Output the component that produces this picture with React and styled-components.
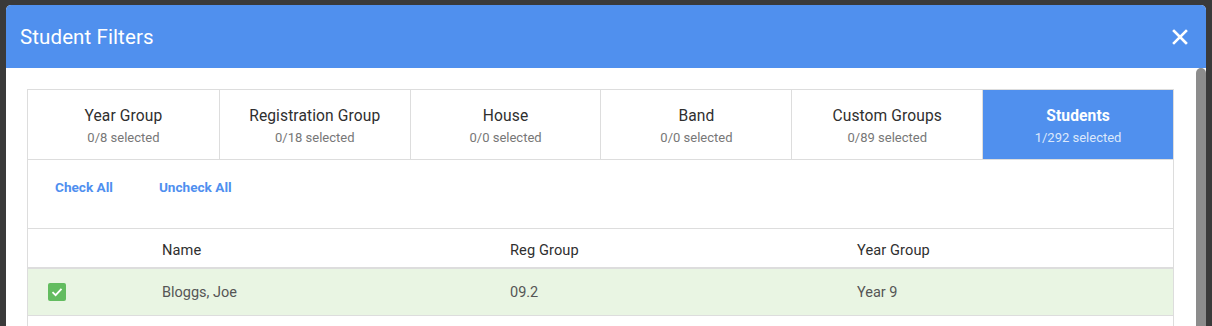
import React from 'react'
import styled, { createGlobalStyle } from 'styled-components'

const GlobalStyle = createGlobalStyle`
  html, body {
    margin: 0;
    padding: 0;
    background: #3a3a3a;
    font-family: Roboto, 'Liberation Sans', Arial, sans-serif;
    overflow: hidden;
  }
`

const tabs = [
  { title: 'Year Group', count: '0/8 selected' },
  { title: 'Registration Group', count: '0/18 selected' },
  { title: 'House', count: '0/0 selected' },
  { title: 'Band', count: '0/0 selected' },
  { title: 'Custom Groups', count: '0/89 selected' },
  { title: 'Students', count: '1/292 selected', active: true }
]

const students = [
  { name: 'Bloggs, Joe', reg: '09.2', year: 'Year 9', checked: true }
]

const App = () => {
  return (
    <>
      <GlobalStyle />
      <Backdrop>
        <Modal>
          <ModalHeader>
            <ModalTitle>Student Filters</ModalTitle>
            <CloseButton aria-label='Close'>
              <svg width='16' height='16' viewBox='0 0 16 16'>
                <path d='M2 2 L14 14 M14 2 L2 14' stroke='#fff' strokeWidth='2.6' strokeLinecap='square' />
              </svg>
            </CloseButton>
          </ModalHeader>

          <ModalBody>
            <Content>
              <FilterBox>
                <TabRow>
                  {tabs.map((t) => (
                    <Tab key={t.title} $active={t.active}>
                      <TabTitle $active={t.active}>{t.title}</TabTitle>
                      <TabCount $active={t.active}>{t.count}</TabCount>
                    </Tab>
                  ))}
                </TabRow>

                <Actions>
                  <ActionLink>Check All</ActionLink>
                  <ActionLink>Uncheck All</ActionLink>
                </Actions>

                <HeadRow>
                  <HeadCell />
                  <HeadCell>Name</HeadCell>
                  <HeadCell>Reg Group</HeadCell>
                  <HeadCell>Year Group</HeadCell>
                </HeadRow>

                {students.map((s) => (
                  <DataRow key={s.name} $checked={s.checked}>
                    <CheckCell>
                      <CheckBox $checked={s.checked}>
                        {s.checked && (
                          <svg width='14' height='14' viewBox='0 0 14 14'>
                            <path d='M2.5 7.2 L5.6 10.2 L11.5 3.8' fill='none' stroke='#fff' strokeWidth='1.8' />
                          </svg>
                        )}
                      </CheckBox>
                    </CheckCell>
                    <DataCell>{s.name}</DataCell>
                    <DataCell>{s.reg}</DataCell>
                    <DataCell>{s.year}</DataCell>
                  </DataRow>
                ))}
                <Filler />
              </FilterBox>
            </Content>
            <ScrollTrack>
              <ScrollThumb />
            </ScrollTrack>
          </ModalBody>
        </Modal>
      </Backdrop>
    </>
  )
}

export default App

const Backdrop = styled.div`
  width: 1212px;
  height: 326px;
  padding: 5px 6px 0 6px;
  box-sizing: border-box;
`

const Modal = styled.div`
  width: 1200px;
  height: 321px;
  border-radius: 5px 5px 0 0;
  overflow: hidden;
  display: flex;
  flex-direction: column;
  background: #fff;
`

const ModalHeader = styled.div`
  height: 63px;
  flex-shrink: 0;
  background: #5090ee;
  display: flex;
  align-items: center;
  justify-content: space-between;
  padding: 0 18px 0 14px;
`

const ModalTitle = styled.h4`
  margin: 0;
  color: #fff;
  font-size: 20.5px;
  font-weight: 400;
  letter-spacing: 0.1px;
`

const CloseButton = styled.button`
  border: 0;
  background: transparent;
  padding: 0;
  width: 16px;
  height: 16px;
  display: flex;
`

const ModalBody = styled.div`
  flex: 1;
  display: flex;
  min-height: 0;
`

const Content = styled.div`
  flex: 1;
  padding: 21px 22px 0 21px;
`

const FilterBox = styled.div`
  border: 1px solid #dddddd;
  border-bottom: 0;
  height: 100%;
  box-sizing: border-box;
  display: flex;
  flex-direction: column;
`

const TabRow = styled.div`
  display: grid;
  grid-template-columns: repeat(6, 1fr);
  border-bottom: 1px solid #dddddd;
  flex-shrink: 0;
`

const Tab = styled.div`
  height: 69px;
  box-sizing: border-box;
  padding-top: 3px;
  display: flex;
  flex-direction: column;
  align-items: center;
  justify-content: center;
  gap: 5px;
  background: ${(p) => (p.$active ? '#5090ee' : '#fff')};
  border-left: 1px solid #dddddd;
  &:first-child {
    border-left: 0;
  }
`

const TabTitle = styled.div`
  font-size: 15.6px;
  font-weight: ${(p) => (p.$active ? 700 : 400)};
  color: ${(p) => (p.$active ? '#fff' : '#2f2f2f')};
  letter-spacing: 0.1px;
`

const TabCount = styled.div`
  font-size: 13px;
  color: ${(p) => (p.$active ? '#dce8fb' : '#777')};
`

const Actions = styled.div`
  height: 69px;
  flex-shrink: 0;
  box-sizing: border-box;
  display: flex;
  align-items: flex-start;
  gap: 46px;
  padding: 19px 0 0 27px;
  border-bottom: 1px solid #dddddd;
`

const ActionLink = styled.a`
  color: #4f8fef;
  font-size: 13.6px;
  font-weight: 700;
  cursor: pointer;
`

const rowGrid = `
  display: grid;
  grid-template-columns: 117px 348px 347px 1fr;
  flex-shrink: 0;
  box-sizing: border-box;
`

const HeadRow = styled.div`
  ${rowGrid}
  height: 40px;
  padding-top: 3px;
  border-bottom: 2px solid #dddddd;
`

const HeadCell = styled.div`
  display: flex;
  align-items: center;
  padding-left: 17px;
  font-size: 14.6px;
  font-weight: 400;
  color: #2f2f2f;
  letter-spacing: 0.1px;
`

const DataRow = styled.div`
  ${rowGrid}
  height: 47px;
  background: ${(p) => (p.$checked ? '#e9f5e3' : '#fff')};
  border-bottom: 1px solid #dddddd;
`

const CheckCell = styled.div`
  display: flex;
  align-items: center;
  padding-left: 20px;
`

const CheckBox = styled.div`
  width: 18px;
  height: 18px;
  border-radius: 2px;
  background: ${(p) => (p.$checked ? '#63bc60' : '#fff')};
  display: flex;
  align-items: center;
  justify-content: center;
`

const DataCell = styled.div`
  display: flex;
  align-items: center;
  padding-left: 17px;
  font-size: 14.5px;
  color: #555;
`

const Filler = styled.div`
  flex: 1;
`

const ScrollTrack = styled.div`
  width: 10px;
  flex-shrink: 0;
  background: #fff;
`

const ScrollThumb = styled.div`
  height: 100%;
  background: #8c8c8c;
  border-radius: 5px 5px 0 0;
`
